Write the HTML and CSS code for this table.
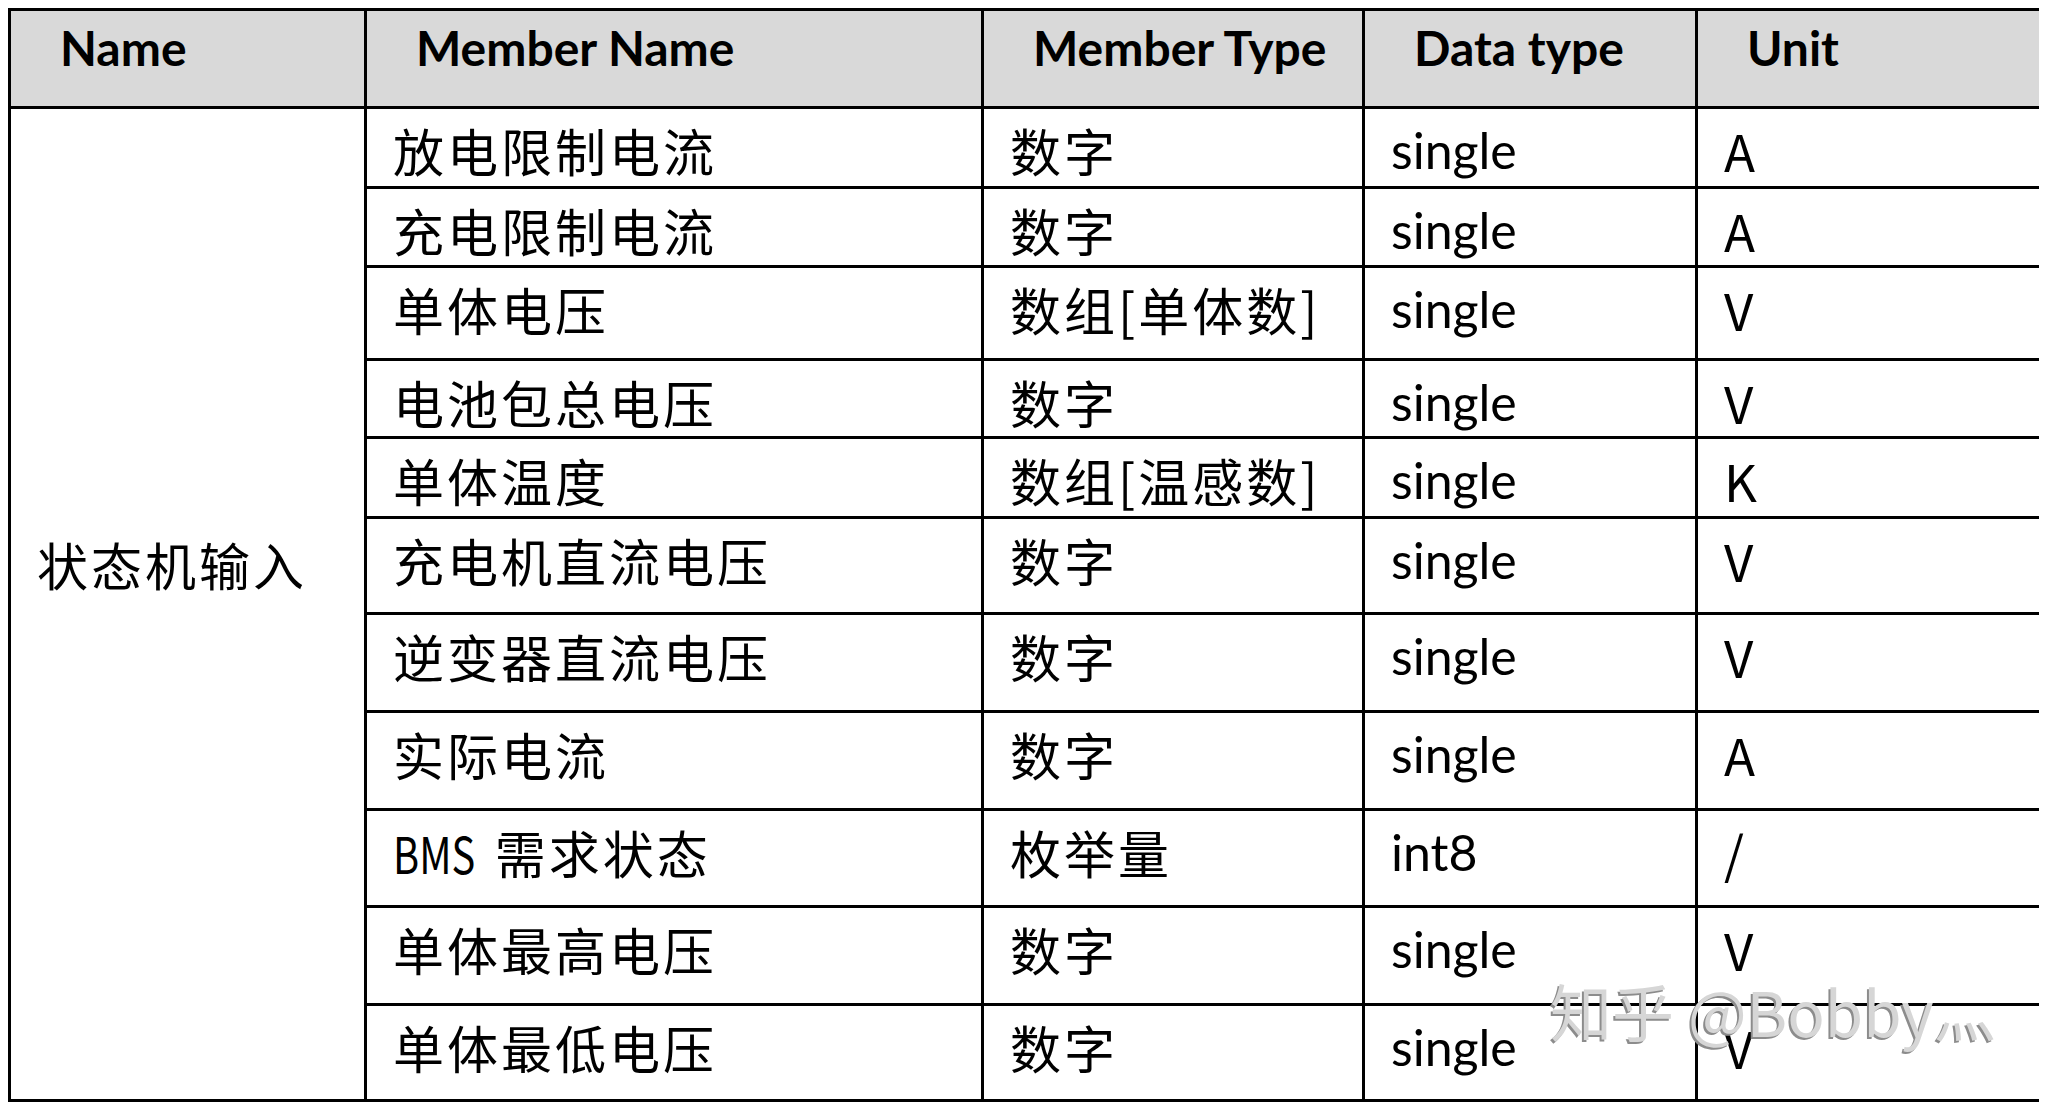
FILE: index.html
```html
<!DOCTYPE html>
<html lang="zh-CN">
<head>
<meta charset="utf-8">
<title>状态机输入</title>
<link rel="stylesheet" href="styles.css">
</head>
<body>
<table class="spec">
  <colgroup>
    <col class="c-name">
    <col class="c-member">
    <col class="c-type">
    <col class="c-data">
    <col class="c-unit">
  </colgroup>
  <thead>
    <tr class="head">
      <th>Name</th>
      <th>Member Name</th>
      <th>Member Type</th>
      <th>Data type</th>
      <th>Unit</th>
    </tr>
  </thead>
  <tbody>
    <tr class="r1">
      <td class="group" rowspan="11">状态机输入</td>
      <td class="cjk">放电限制电流</td>
      <td class="cjk">数字</td>
      <td class="lat">single</td>
      <td class="unit">A</td>
    </tr>
    <tr class="r2">
      <td class="cjk">充电限制电流</td>
      <td class="cjk">数字</td>
      <td class="lat">single</td>
      <td class="unit">A</td>
    </tr>
    <tr class="r3">
      <td class="cjk">单体电压</td>
      <td class="cjk">数组[单体数]</td>
      <td class="lat">single</td>
      <td class="unit">V</td>
    </tr>
    <tr class="r4">
      <td class="cjk">电池包总电压</td>
      <td class="cjk">数字</td>
      <td class="lat">single</td>
      <td class="unit">V</td>
    </tr>
    <tr class="r5">
      <td class="cjk">单体温度</td>
      <td class="cjk">数组[温感数]</td>
      <td class="lat">single</td>
      <td class="unit">K</td>
    </tr>
    <tr class="r6">
      <td class="cjk">充电机直流电压</td>
      <td class="cjk">数字</td>
      <td class="lat">single</td>
      <td class="unit">V</td>
    </tr>
    <tr class="r7">
      <td class="cjk">逆变器直流电压</td>
      <td class="cjk">数字</td>
      <td class="lat">single</td>
      <td class="unit">V</td>
    </tr>
    <tr class="r8">
      <td class="cjk">实际电流</td>
      <td class="cjk">数字</td>
      <td class="lat">single</td>
      <td class="unit">A</td>
    </tr>
    <tr class="r9">
      <td class="cjk"><span class="abbr">BMS</span> 需求状态</td>
      <td class="cjk">枚举量</td>
      <td class="lat">int8</td>
      <td class="unit">/</td>
    </tr>
    <tr class="r10">
      <td class="cjk">单体最高电压</td>
      <td class="cjk">数字</td>
      <td class="lat">single</td>
      <td class="unit">V</td>
    </tr>
    <tr class="r11">
      <td class="cjk">单体最低电压</td>
      <td class="cjk">数字</td>
      <td class="lat">single</td>
      <td class="unit">V</td>
    </tr>
  </tbody>
</table>
<div class="watermark">知乎 @Bobby灬</div>
</body>
</html>
```

FILE: styles.css
```css
html, body {
  background: #ffffff;
}
body {
  margin: 8px;
  color: #000;
  font-family: "Noto Sans CJK SC", "Noto Sans", sans-serif;
}
.spec {
  border-collapse: collapse;
  table-layout: fixed;
  width: 2034px;
  border: 3px solid #000;
}
.c-name { width: 356px; }
.c-member { width: 617px; }
.c-type { width: 381px; }
.c-data { width: 333px; }
.c-unit { width: 347px; }

.spec th,
.spec td {
  border: 3px solid #000;
  padding: 0 0 0 26px;
  text-align: left;
  vertical-align: top;
  white-space: nowrap;
}
.spec th {
  background: #d9d9d9;
  font-family: Lato, "Liberation Sans", sans-serif;
  font-weight: 700;
  font-size: 48px;
  line-height: 60px;
  padding-top: 7px;
  padding-left: 49px;
  color: #000;
}
.head { height: 98px; }
.r1 { height: 80px; }
.r2 { height: 79px; }
.r3 { height: 93px; }
.r4 { height: 78px; }
.r5 { height: 80px; }
.r6 { height: 96px; }
.r7 { height: 98px; }
.r8 { height: 98px; }
.r9 { height: 97px; }
.r10 { height: 98px; }
.r11 { height: 96px; }

.spec td {
  font-size: 51px;
  line-height: 56px;
  padding-top: 13px;
}
.spec td.cjk,
.spec td.group {
  font-family: "Noto Sans CJK SC", "Noto Sans", sans-serif;
  letter-spacing: 3px;
}
.spec td.unit {
  font-family: "Noto Sans CJK SC", "Noto Sans", sans-serif;
  font-weight: 400;
}
.spec td.lat {
  font-family: Lato, "Liberation Sans", sans-serif;
  font-size: 50px;
}
.spec td.group {
  vertical-align: middle;
  padding-top: 0;
  padding-bottom: 80px;
}
.abbr {
  display: inline-block;
  letter-spacing: 0;
  transform: scaleX(0.78);
  transform-origin: left center;
  margin-right: -18px;
}
.watermark {
  position: absolute;
  left: 1550px;
  top: 975px;
  font-family: "Noto Sans CJK SC", "Liberation Sans", sans-serif;
  font-size: 62px;
  line-height: 70px;
  color: #d6d6d6;
  text-shadow: -2px 2px 0 #8c8c8c;
  white-space: nowrap;
}
```
